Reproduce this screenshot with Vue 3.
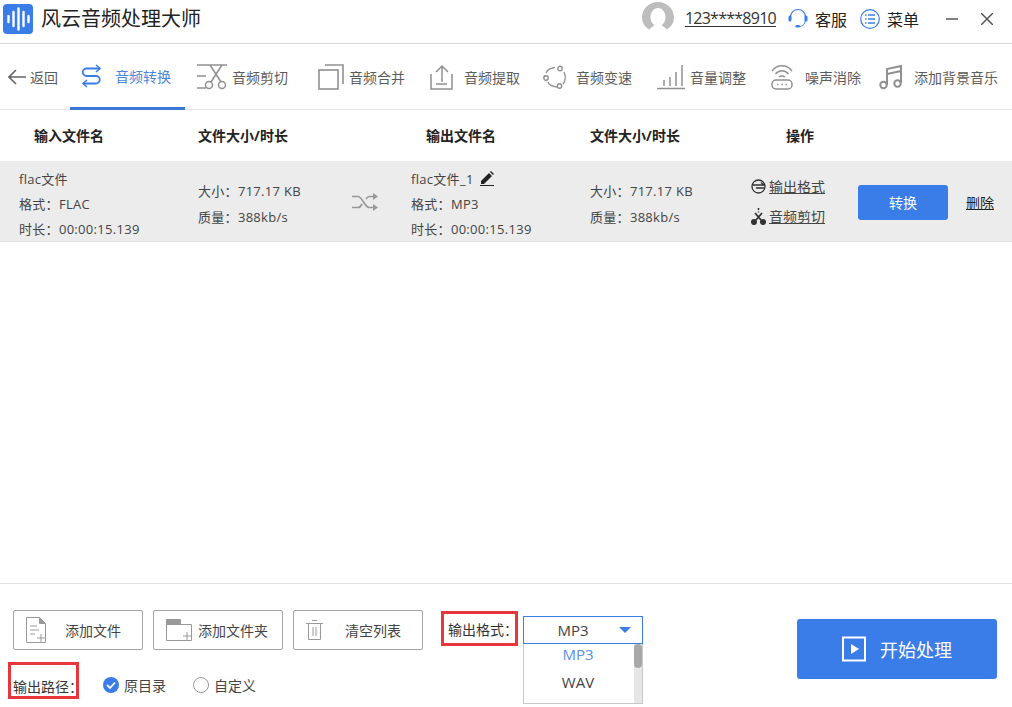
<script setup>
const meta1 = ['大小：717.17 KB', '质量：388kb/s']
const navIcons = [
  { label: '音频剪切', key: 'cut' },
  { label: '音频合并', key: 'merge' },
  { label: '音频提取', key: 'extract' },
  { label: '音频变速', key: 'speed' },
  { label: '音量调整', key: 'volume' },
  { label: '噪声消除', key: 'noise' },
  { label: '添加背景音乐', key: 'music' }
]
</script>

<template>
  <div class="app">
    <header class="titlebar">
      <svg class="logo" viewBox="0 0 30 30" width="30" height="30">
        <rect width="30" height="30" rx="4" fill="#3b7de8" />
        <g stroke="#fff" stroke-width="2.4" stroke-linecap="round">
          <path d="M5.5 12v6M10.5 8v14M15.5 4.5v21M20.5 8v14M25.5 12v6" />
        </g>
      </svg>
      <h1 class="title">风云音频处理大师</h1>
      <div class="spacer"></div>
      <svg class="avatar" viewBox="0 0 32 28" width="32" height="28">
        <path d="M7 27.500C2.500 24.500 0 20.500 0 15.500 0 7 7 0 16 0s16 7 16 15.500c0 5-2.500 9-7 12l-5.500-4.500c2.500-1.500 4-4 4-8 0-5-3.500-9-7.500-9s-7.500 4-7.500 9c0 4 1.500 6.500 4 8z" fill="#bdbdbd" />
      </svg>
      <span class="phone">123****8910</span>
      <svg class="headset" viewBox="0 0 20 24" width="20" height="24" fill="none">
        <path d="M2.500 12V10a7.500 7.500 0 0 1 15 0v2" stroke="#3b7de8" stroke-width="1.200" />
        <rect x="0.500" y="8.500" width="3" height="6" rx="1.500" fill="#3b7de8" />
        <rect x="16.500" y="8.500" width="3" height="6" rx="1.500" fill="#3b7de8" />
        <path d="M17 14c0 3-2 5.500-6 5.500" stroke="#3b7de8" stroke-width="1" />
        <rect x="7.500" y="18" width="4.500" height="2.500" rx="1.200" fill="#3b7de8" />
      </svg>
      <span class="top-link service">客服</span>
      <svg class="menu-icon" viewBox="0 0 20 20" width="20" height="20" fill="none" stroke="#3b7de8">
        <circle cx="10" cy="10" r="9.300" stroke-width="1.200" />
        <path d="M8 6h7M8 10h7M8 14h7M5 6h1.500M5 10h1.500M5 14h1.500" stroke-width="1.400" />
      </svg>
      <span class="top-link menu-label">菜单</span>
      <svg class="win-min" viewBox="0 0 12 12" width="12" height="12"><path d="M0 6h12" stroke="#555" stroke-width="1.500" /></svg>
      <svg class="win-close" viewBox="0 0 12 12" width="12" height="12"><path d="M0 0l12 12M12 0L0 12" stroke="#555" stroke-width="1.500" /></svg>
    </header>

    <nav class="nav">
      <div class="back">
        <svg viewBox="0 0 18 16" width="18" height="16" fill="none" stroke="#666" stroke-width="1.600">
          <path d="M18 8H1M8 1L1 8l7 7" />
        </svg>
        <span>返回</span>
      </div>
      <div class="tab-active">
        <svg viewBox="0 0 22 24" width="22" height="24" fill="none" stroke="#3b7de8" stroke-width="1.800">
          <path d="M20 4.500H6.500a3.500 3.500 0 0 0 0 7.500h9.500a3.500 3.500 0 0 1 0 7.500H3" />
          <path d="M16 1l4 3.500-4 3.500M7 16l-4 3.500L7 23" stroke-width="1.500" />
        </svg>
        <span>音频转换</span>
      </div>
      <div v-for="item in navIcons" :key="item.key" class="tab" :class="'tab-' + item.key">
        <svg v-if="item.key === 'cut'" viewBox="0 0 30 26" width="30" height="26" fill="none" stroke="#909090" stroke-width="1.500">
          <path d="M0 1h30M0 12h9M0 24h9" />
          <path d="M13 1l11 17M25 1L14 18" />
          <circle cx="12" cy="21" r="3.500" />
          <circle cx="25" cy="21" r="3.500" />
        </svg>
        <svg v-else-if="item.key === 'merge'" viewBox="0 0 26 26" width="26" height="26" fill="none" stroke="#909090" stroke-width="1.600">
          <rect x="1" y="6" width="19" height="19" />
          <path d="M7 1h18v19" />
        </svg>
        <svg v-else-if="item.key === 'extract'" viewBox="0 0 24 26" width="24" height="26" fill="none" stroke="#909090" stroke-width="1.500">
          <path d="M1 10v15h21V10M12 18V2M6 8l6-6 6 6M6 20h11" />
        </svg>
        <svg v-else-if="item.key === 'speed'" viewBox="0 0 24 24" width="24" height="24" fill="none" stroke="#909090" stroke-width="1.400">
          <path d="M3 8c1.500-3 4-5 9-5.500M21 7c2 4 1.500 9-1 12M5 17c1 3 4 4.500 9 5M1.500 12c0-.500 0-1 .1-1.500" />
          <circle cx="17" cy="3.500" r="2.200" />
          <circle cx="3" cy="13" r="2.200" />
          <circle cx="16.500" cy="21" r="2.200" />
        </svg>
        <svg v-else-if="item.key === 'volume'" viewBox="0 0 28 26" width="28" height="26" fill="none" stroke="#909090" stroke-width="1.500">
          <path d="M0 24.500h28M7 16v6M13 13v9M19 8v14M25 1v21" />
        </svg>
        <svg v-else-if="item.key === 'noise'" viewBox="0 0 22 26" width="22" height="26" fill="none" stroke="#909090" stroke-width="1.500">
          <path d="M1 7c5-7 15-7 20 0M4.500 10c3.500-4.500 9.500-4.500 13 0M8 13c1.500-1.500 4.500-1.500 6 0" />
          <rect x="1" y="16" width="20" height="9" rx="4" />
          <path d="M6 20.500h1.500M10.300 20.500h1.500M14.500 20.500h1.500" />
        </svg>
        <svg v-else viewBox="0 0 24 26" width="24" height="26" fill="none" stroke="#909090" stroke-width="2">
          <path d="M8 21V5l14-3v17M8 10l14-3" />
          <circle cx="4.500" cy="21" r="3.200" />
          <circle cx="18.500" cy="19.500" r="3.200" />
        </svg>
        <span>{{ item.label }}</span>
      </div>
    </nav>

    <div class="thead">
      <span>输入文件名</span>
      <span>文件大小/时长</span>
      <span>输出文件名</span>
      <span>文件大小/时长</span>
      <span>操作</span>
    </div>

    <section class="row">
      <div class="col col-in">
        <span>flac文件</span>
        <span>格式：FLAC</span>
        <span>时长：00:00:15.139</span>
      </div>
      <div class="col col-size">
        <span v-for="m in meta1" :key="m">{{ m }}</span>
      </div>
      <div class="col-shuffle">
        <svg viewBox="0 0 27 18" width="27" height="18" fill="none" stroke="#999" stroke-width="1.700">
          <path d="M0 3.500h6c4 0 7 11 11 11h7M0 14.500h6c1.500 0 3-1.500 4-3.500M14 6c1-1.500 2-2.500 3.500-2.500H24" />
          <path d="M21 0l5 3.500-5 3.500zM21 11l5 3.500-5 3.500z" fill="#999" stroke="none" />
        </svg>
      </div>
      <div class="col col-out">
        <span class="name">flac文件_1
          <svg viewBox="0 0 14 16" width="14" height="16">
            <path d="M1 11l8-8 3 3-8 8H1zM10 2l1-1 3 3-1 1z" fill="#222" />
            <path d="M0 15.500h14" stroke="#222" stroke-width="1" />
          </svg>
        </span>
        <span>格式：MP3</span>
        <span>时长：00:00:15.139</span>
      </div>
      <div class="col col-size2">
        <span v-for="m in meta1" :key="m">{{ m }}</span>
      </div>
      <div class="col-ops">
        <a class="op">
          <svg viewBox="0 0 15 15" width="15" height="15" fill="none" stroke="#333" stroke-width="1.300">
            <circle cx="7.500" cy="7.500" r="6.500" />
            <path d="M2 6h11l-3-2.500M13 9H5" />
          </svg>
          <span>输出格式</span>
        </a>
        <a class="op">
          <svg viewBox="0 0 15 17" width="15" height="17" fill="none" stroke="#333" stroke-width="1.500">
            <path d="M7.500 0v2M7.500 3.500v1" />
            <path d="M4 5l6 7M11 5l-6 7" stroke-width="1.800" />
            <circle cx="3" cy="14" r="2.300" fill="#333" />
            <circle cx="12" cy="14" r="2.300" fill="#333" />
          </svg>
          <span>音频剪切</span>
        </a>
      </div>
      <button class="convert">转换</button>
      <a class="delete">删除</a>
    </section>

    <main class="empty"></main>

    <footer class="footer">
      <div class="footer-left">
        <div class="actions">
          <button class="act act-file">
            <svg viewBox="0 0 20 26" width="20" height="26" fill="none" stroke="#999">
              <path d="M.500.500h13l6 6v19H.500z" />
              <path d="M13.500.500l6 6h-6z" fill="#999" />
              <path d="M4 9h7M4 13h9M4 17h5M11 21h8M15 17v8" />
            </svg>
            <span>添加文件</span>
          </button>
          <button class="act act-folder">
            <svg viewBox="0 0 26 22" width="26" height="22" fill="none" stroke="#999">
              <path d="M.500 5.500h25v16H.500z" />
              <path d="M.500.500h14v5H.500z" fill="#999" />
              <path d="M17 17h8M21 13v8" />
            </svg>
            <span>添加文件夹</span>
          </button>
          <button class="act act-clear">
            <svg viewBox="0 0 17 20" width="17" height="20" fill="none" stroke="#999">
              <path d="M0 3.500h17M6 .500h5M2.500 3.500v16h12v-16M7 7v9M10 7v9" />
            </svg>
            <span>清空列表</span>
          </button>
        </div>
        <div class="path-row">
          <span class="marked marked-path">输出路径：</span>
          <span class="radio radio-on">
            <svg viewBox="0 0 16 16" width="16" height="16">
              <circle cx="8" cy="8" r="8" fill="#3b7de8" />
              <path d="M4 8l3 3 5-5.500" fill="none" stroke="#fff" stroke-width="1.800" />
            </svg>
            原目录
          </span>
          <span class="radio radio-off">
            <i class="dot"></i>
            自定义
          </span>
        </div>
      </div>

      <div class="format">
        <span class="marked marked-format">输出格式：</span>
        <div class="select">
          <div class="select-head">
            <span>MP3</span>
            <i class="caret"></i>
          </div>
          <div class="dropdown">
            <div class="opt opt-on">MP3</div>
            <div class="opt">WAV</div>
            <div class="track"><i class="thumb"></i></div>
          </div>
        </div>
      </div>

      <button class="start">
        <svg viewBox="0 0 24 26" width="24" height="26" fill="none">
          <rect x="1" y="1.500" width="22" height="23" stroke="#fff" stroke-width="2" />
          <path d="M9 8l8 5-8 5z" fill="#fff" />
        </svg>
        <span>开始处理</span>
      </button>
    </footer>
  </div>
</template>

<style>
html, body { margin: 0; background: #fff; }
</style>

<style scoped>
.app {
  width: 1012px;
  height: 707px;
  overflow: hidden;
  display: flex;
  flex-direction: column;
  font-family: "Open Sans", "Noto Sans CJK SC", sans-serif;
  color: #333;
  background: #fff;
}
.titlebar {
  flex: none;
  display: flex;
  align-items: center;
  padding: 0 19px 5px 3px;
  box-sizing: border-box;
  border-bottom: 1px solid #d9d9d9;
  height: 44px;
}
.title {
  margin: 0 0 0 8px;
  font-size: 20px;
  font-weight: 400;
  color: #222;
  line-height: 28px;
}
.spacer { flex: 1; }
.avatar {
  align-self: flex-start;
  margin-top: 2px;
}
.phone {
  margin: 0 0 2px 11px;
  font-size: 16px;
  letter-spacing: -0.75px;
  color: #333;
  text-decoration: underline;
  text-underline-offset: 2px;
}
.headset { margin-left: 12px; }
.top-link { font-size: 16px; color: #222; }
.service { margin-left: 7px; }
.menu-icon { margin-left: 13px; }
.menu-label { margin-left: 7px; }
.win-min { margin-left: 27px; }
.win-close { margin-left: 23px; }

.nav {
  height: 66px;
  flex: none;
  display: flex;
  align-items: stretch;
  box-sizing: border-box;
  border-bottom: 1px solid #e3e3e3;
  font-size: 14px;
  color: #5c5c5c;
}
.back {
  width: 70px;
  display: flex;
  align-items: center;
  padding-left: 8px;
  gap: 4px;
  box-sizing: border-box;
}
.tab-active {
  width: 115px;
  display: flex;
  align-items: center;
  box-sizing: border-box;
  padding-left: 10px;
  gap: 13px;
  color: #4a86dc;
  border-bottom: 3px solid #3b78d8;
  margin-bottom: -1px;
}
.tab {
  display: flex;
  align-items: center;
  white-space: nowrap;
}
.tab-cut { margin-left: 12px; gap: 5px; }
.tab-merge { margin-left: 30px; gap: 5px; }
.tab-extract { margin-left: 25px; gap: 10px; }
.tab-speed { margin-left: 23px; gap: 9px; }
.tab-volume { margin-left: 25px; gap: 5px; }
.tab-noise { margin-left: 25px; gap: 12px; }
.tab-music { margin-left: 18px; gap: 11px; }

.thead {
  height: 51px;
  flex: none;
  display: grid;
  grid-template-columns: 138px 210px 226px 122px 208px;
  align-items: center;
  justify-items: center;
  box-sizing: border-box;
  padding-bottom: 2px;
  font-size: 14px;
  font-weight: 700;
  color: #222;
}

.row {
  height: 81px;
  flex: none;
  display: flex;
  align-items: center;
  background: #ececec;
  font-size: 13px;
  color: #444;
  box-sizing: border-box;
  border-bottom: 1px solid #e3e3e3;
}
.col {
  display: flex;
  flex-direction: column;
  line-height: 25px;
  letter-spacing: 0.3px;
  white-space: nowrap;
  padding-top: 6px;
}
.col-in { width: 179px; margin-left: 19px; }
.col-size { width: 153px; line-height: 26px; }
.col-size2 { width: 161px; line-height: 26px; }
.col-shuffle { width: 60px; display: flex; padding: 1px 0 0 1px; box-sizing: border-box; }
.col-out { width: 179px; }
.name svg { margin-left: 3px; vertical-align: -2px; }
.col-ops {
  width: 107px;
  display: flex;
  flex-direction: column;
  gap: 10px;
  font-size: 14px;
  box-sizing: border-box;
}
.op {
  display: flex;
  align-items: center;
  gap: 3px;
  height: 20px;
  color: #444;
}
.op span { text-decoration: underline; }
.convert {
  width: 90px;
  height: 35px;
  margin-top: 2px;
  border: 0;
  border-radius: 3px;
  background: #3b7de8;
  color: #fff;
  font: inherit;
  font-size: 14px;
  padding: 0;
}
.delete {
  margin: 2px 0 0 18px;
  font-size: 14px;
  color: #222;
  text-decoration: underline;
}

.empty { flex: 1; }

.footer {
  height: 124px;
  flex: none;
  display: flex;
  align-items: flex-start;
  box-sizing: border-box;
  border-top: 1px solid #e3e3e3;
  font-size: 14px;
  color: #444;
  position: relative;
}
.footer-left {
  width: 428px;
  padding: 26px 0 0 8px;
  box-sizing: border-box;
}
.actions {
  display: flex;
  gap: 10px;
  margin-left: 5px;
}
.act {
  width: 130px;
  height: 40px;
  box-sizing: border-box;
  background: #fff;
  border: 1px solid #a6a6a6;
  border-radius: 2px;
  display: flex;
  align-items: center;
  padding: 0 0 0 12px;
  font: inherit;
  color: #444;
}
.act-file { gap: 19px; }
.act-folder { gap: 6px; }
.act-clear { gap: 22px; }
.path-row {
  display: flex;
  align-items: flex-start;
  margin-top: 12px;
  height: 37px;
}
.marked {
  box-sizing: border-box;
  border: 3px solid #e8363c;
  display: flex;
  align-items: center;
  white-space: nowrap;
  color: #333;
}
.marked-path {
  width: 71px;
  height: 37px;
  padding: 10px 0 0 2px;
}
.radio {
  display: flex;
  align-items: center;
  gap: 5px;
  height: 24px;
  margin-top: 11px;
}
.radio-on { margin-left: 24px; }
.radio-off { margin-left: 27px; }
.dot {
  width: 14px;
  height: 14px;
  border: 1px solid #999;
  border-radius: 50%;
  background: #fff;
  display: block;
}

.format {
  display: flex;
  align-items: flex-start;
  margin: 27px 0 0 13px;
}
.marked-format {
  width: 77px;
  height: 35px;
  padding-left: 4px;
}
.select {
  position: relative;
  width: 120px;
  margin: 5px 0 0 5px;
}
.select-head {
  height: 28px;
  box-sizing: border-box;
  border: 1px solid #3b7de8;
  display: flex;
  align-items: center;
  justify-content: center;
  font-size: 15px;
  padding-right: 20px;
  position: relative;
  color: #444;
}
.caret {
  position: absolute;
  right: 11px;
  top: 10px;
  border-left: 6px solid transparent;
  border-right: 6px solid transparent;
  border-top: 6px solid #3b7de8;
}
.dropdown {
  position: absolute;
  left: 0;
  top: 28px;
  width: 120px;
  height: 60px;
  box-sizing: border-box;
  border: 1px solid #c8c8c8;
  border-top: 0;
  background: #fff;
  font-size: 15px;
  color: #444;
  overflow: hidden;
}
.opt {
  height: 28px;
  line-height: 21px;
  text-align: center;
  padding-right: 10px;
}
.opt-on { color: #5a8fe6; }
.track {
  position: absolute;
  right: 0;
  top: 0;
  bottom: 0;
  width: 8px;
  background: #e6e6e6;
}
.thumb {
  display: block;
  width: 8px;
  height: 24px;
  border-radius: 4px;
  background: #a8a8a8;
}
.start {
  margin: 35px 0 0 154px;
  width: 200px;
  height: 60px;
  border: 0;
  border-radius: 3px;
  background: #3b7de8;
  color: #fff;
  font: inherit;
  font-size: 18px;
  display: flex;
  align-items: center;
  justify-content: center;
  gap: 14px;
  padding: 0;
}
</style>
